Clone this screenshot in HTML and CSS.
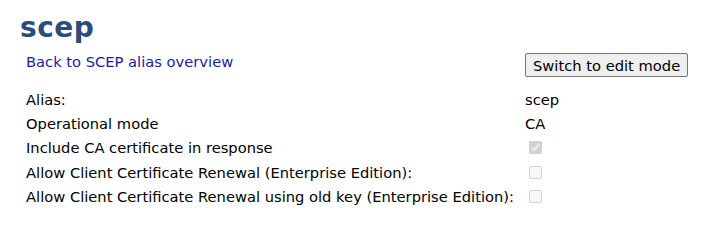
FILE: index.html
```html
<!DOCTYPE html>
<html>
<head>
<meta charset="utf-8">
<link rel="stylesheet" href="styles.css">
</head>
<body>
<div class="page">
  <h1 class="title">scep</h1>
  <div class="grid">
    <div class="cell top"><a class="back" href="#">Back to SCEP alias overview</a></div>
    <div class="cell top"><button class="btn" type="button">Switch to edit mode</button></div>
    <div class="cell label">Alias:</div>
    <div class="cell">scep</div>
    <div class="cell label">Operational mode</div>
    <div class="cell">CA</div>
    <div class="cell label">Include CA certificate in response</div>
    <div class="cell"><input class="chk" type="checkbox" checked disabled></div>
    <div class="cell label">Allow Client Certificate Renewal (Enterprise Edition):</div>
    <div class="cell"><input class="chk" type="checkbox" disabled></div>
    <div class="cell label">Allow Client Certificate Renewal using old key (Enterprise Edition):</div>
    <div class="cell"><input class="chk" type="checkbox" disabled></div>
  </div>
</div>
</body>
</html>
```
FILE: styles.css
```css
html, body {
  margin: 0;
  padding: 0;
  background: #ffffff;
}
body {
  font-family: "DejaVu Sans", Verdana, sans-serif;
  font-size: 14.7px;
  color: #000000;
}
.page {
  padding: 10px 20px 0 20px;
}
.title {
  margin: 0;
  font-size: 28px;
  letter-spacing: 0.5px;
  font-weight: bold;
  color: #2b4d7b;
  line-height: 36px;
}
.grid {
  display: grid;
  grid-template-columns: 499px auto;
  grid-template-rows: 37px;
  grid-auto-rows: 24.3px;
  padding-left: 6px;
  margin-top: 4px;
}
.cell {
  display: flex;
  align-items: center;
  line-height: 17px;
  white-space: nowrap;
}
.cell.top {
  align-items: flex-start;
}
.back {
  color: #1c1c9c;
  text-decoration: none;
  margin-top: 3px;
}
.btn {
  font-family: "DejaVu Sans", Verdana, sans-serif;
  font-size: 14.7px;
  color: #000;
  background: #efefef;
  border: 1px solid #767676;
  border-radius: 2px;
  padding: 0 7px;
  height: 24px;
  margin: 3px 0 0 0;
}
.chk {
  width: 13px;
  height: 13px;
  margin: 0 0 0 4px;
}
```
